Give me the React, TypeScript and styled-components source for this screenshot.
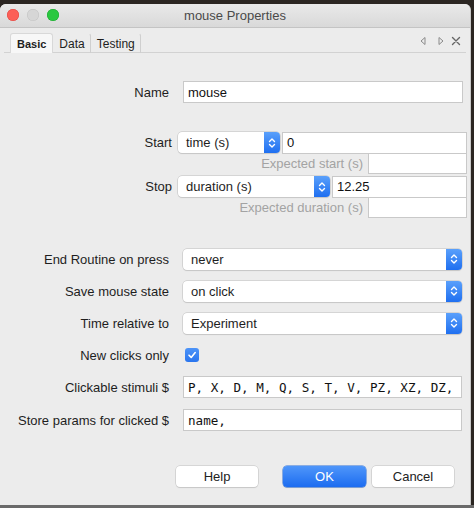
import React from 'react';
import styled, { createGlobalStyle } from 'styled-components';

const GlobalStyle = createGlobalStyle`
  html, body {
    margin: 0;
    padding: 0;
    background: #2b2622;
  }
  body {
    font-family: 'Liberation Sans', Arial, sans-serif;
    font-size: 13px;
    color: #222;
  }
`;

const Stepper = () => (
  <StepperBox>
    <svg width="8" height="12" viewBox="0 0 8 12">
      <path d="M1.5 4.5 L4 2 L6.5 4.5 M1.5 7.5 L4 10 L6.5 7.5" fill="none" stroke="#fff" strokeWidth="1.4" strokeLinecap="round" strokeLinejoin="round" />
    </svg>
  </StepperBox>
);

type SelectProps = { value: string; width?: number };

const Select: React.FC<SelectProps> = ({ value, width }) => (
  <SelectBox $width={width}>
    <span>{value}</span>
    <Stepper />
  </SelectBox>
);

const NavIcons = () => (
  <NavRow>
    <NavArrows>
      <svg width="8" height="10" viewBox="0 0 8 10">
        <path d="M6 1.5 L2 5 L6 8.5 Z" fill="none" stroke="#8a8a8a" strokeWidth="1" strokeLinejoin="round" />
      </svg>
      <svg width="8" height="10" viewBox="0 0 8 10">
        <path d="M2 1.5 L6 5 L2 8.5 Z" fill="none" stroke="#8a8a8a" strokeWidth="1" strokeLinejoin="round" />
      </svg>
    </NavArrows>
    <svg width="10" height="10" viewBox="0 0 10 10">
      <path d="M1.5 1.5 L8.5 8.5 M8.5 1.5 L1.5 8.5" stroke="#666" strokeWidth="1.4" strokeLinecap="round" />
    </svg>
  </NavRow>
);

const App: React.FC = () => {
  return (
    <>
      <GlobalStyle />
      <Window>
        <TitleBar>
          <Lights>
            <Light $color="#fc5f57" $edge="#de4640" />
            <Light $color="#d6d6d6" $edge="#c2c2c2" />
            <Light $color="#2ac840" $edge="#1aa52e" />
          </Lights>
          <Title>mouse Properties</Title>
        </TitleBar>

        <TabBar>
          <Tabs>
            <Tab $active>Basic</Tab>
            <Tab>Data</Tab>
            <Tab>Testing</Tab>
          </Tabs>
          <NavIcons />
        </TabBar>

        <Panel>
          <NameRow>
            <Label $width={165}>Name</Label>
            <TextInput>mouse</TextInput>
          </NameRow>

          <TimingSection>
            <TimingRow>
              <Label $width={168}>Start</Label>
              <Select value="time (s)" width={102} />
              <TextInput>0</TextInput>
            </TimingRow>
            <ExpectedRow>
              <HintLabel>Expected start (s)</HintLabel>
              <SmallInput />
            </ExpectedRow>
            <TimingRow $spaced>
              <Label $width={168}>Stop</Label>
              <Select value="duration (s)" width={152} />
              <TextInput>12.25</TextInput>
            </TimingRow>
            <ExpectedRow>
              <HintLabel>Expected duration (s)</HintLabel>
              <SmallInput />
            </ExpectedRow>
          </TimingSection>

          <ParamsGrid>
            <Label>End Routine on press</Label>
            <Select value="never" />
            <Label>Save mouse state</Label>
            <Select value="on click" />
            <Label>Time relative to</Label>
            <Select value="Experiment" />
            <Label>New clicks only</Label>
            <CheckRow>
              <Checkbox>
                <svg width="10" height="10" viewBox="0 0 10 10">
                  <path d="M2 5.2 L4.2 7.4 L8.2 2.6" fill="none" stroke="#fff" strokeWidth="1.6" strokeLinecap="round" strokeLinejoin="round" />
                </svg>
              </Checkbox>
            </CheckRow>
            <Label>Clickable stimuli $</Label>
            <CodeInput>P, X, D, M, Q, S, T, V, PZ, XZ, DZ,</CodeInput>
            <Label>Store params for clicked $</Label>
            <CodeInput>name,</CodeInput>
          </ParamsGrid>

          <ButtonRow>
            <Button>Help</Button>
            <Spacer />
            <Button $primary>OK</Button>
            <Button>Cancel</Button>
          </ButtonRow>
        </Panel>
      </Window>
      <Dock />
    </>
  );
};

const Window = styled.div`
  margin: 4px 3px 0 0;
  height: 501px;
  background: #ececec;
  border-radius: 6px 6px 0 0;
  border-right: 1px solid #c8c8c8;
  display: flex;
  flex-direction: column;
  overflow: hidden;
`;

const TitleBar = styled.div`
  position: relative;
  height: 23px;
  display: flex;
  align-items: center;
  justify-content: center;
  background: linear-gradient(#e9e9e9, #d9d9d9);
  border-bottom: 1px solid #c4c4c4;
`;

const Lights = styled.div`
  position: absolute;
  left: 7px;
  top: 5px;
  display: flex;
  gap: 8px;
`;

const Light = styled.span<{ $color: string; $edge: string }>`
  width: 12px;
  height: 12px;
  border-radius: 50%;
  background: ${(p) => p.$color};
  box-shadow: inset 0 0 0 0.5px ${(p) => p.$edge};
`;

const Title = styled.span`
  font-size: 13px;
  color: #4a4a4a;
`;

const TabBar = styled.div`
  display: flex;
  align-items: flex-end;
  justify-content: space-between;
  height: 24px;
  margin: 0 4px;
  border-bottom: 1px solid #d2d2d2;
`;

const Tabs = styled.div`
  display: flex;
  align-items: flex-end;
  padding-left: 6px;
`;

const Tab = styled.div<{ $active?: boolean }>`
  height: 19px;
  display: flex;
  align-items: center;
  padding: 0 ${(p) => (p.$active ? '6px' : '5px')};
  font-size: ${(p) => (p.$active ? '11px' : '12px')};
  font-weight: ${(p) => (p.$active ? 700 : 400)};
  color: #1e1e1e;
  background: ${(p) => (p.$active ? '#f7f7f7' : 'transparent')};
  border: 1px solid ${(p) => (p.$active ? '#d8d8d8' : 'transparent')};
  border-bottom: none;
  border-right: 1px solid ${(p) => (p.$active ? '#d8d8d8' : '#cfcfcf')};
  border-radius: 3px 3px 0 0;
  margin-bottom: -1px;
`;

const NavRow = styled.div`
  display: flex;
  align-items: center;
  gap: 6px;
  height: 19px;
  padding-right: 5px;
  margin-bottom: 2px;
`;

const NavArrows = styled.div`
  display: flex;
  align-items: center;
  gap: 10px;
`;

const Panel = styled.div`
  flex: 1;
  display: flex;
  flex-direction: column;
  margin: 0 3px 0 4px;
  padding-top: 28px;
`;

const Label = styled.div<{ $width?: number }>`
  ${(p) => (p.$width ? `width: ${p.$width}px;` : '')}
  flex-shrink: 0;
  text-align: right;
  font-size: 13px;
  color: #1e1e1e;
  white-space: nowrap;
`;

const HintLabel = styled(Label)`
  color: #a3a3a3;
`;

const NameRow = styled.div`
  display: flex;
  align-items: center;
  gap: 14px;
  height: 22px;
  padding-right: 4px;
`;

const TextInput = styled.div`
  flex: 1;
  height: 20px;
  display: flex;
  align-items: center;
  padding: 0 4px;
  background: #fff;
  border: 1px solid #c9c9c9;
  font-size: 13px;
  color: #111;
  min-width: 0;
`;

const SmallInput = styled.div`
  width: 97px;
  height: 19px;
  background: #fff;
  border: 1px solid #c9c9c9;
`;

const CodeInput = styled(TextInput)`
  font-family: 'DejaVu Sans Mono', 'Liberation Mono', monospace;
  font-size: 12.6px;
  white-space: nowrap;
  overflow: hidden;
`;

const TimingSection = styled.div`
  display: flex;
  flex-direction: column;
  margin-top: 29px;
`;

const TimingRow = styled.div<{ $spaced?: boolean }>`
  display: flex;
  align-items: center;
  height: 21px;
  gap: 2px;
  margin-top: ${(p) => (p.$spaced ? '2px' : '0')};
  & > ${Label} {
    margin-right: 4px;
  }
`;

const ExpectedRow = styled.div`
  display: flex;
  align-items: center;
  justify-content: flex-end;
  gap: 5px;
  height: 21px;
`;

const SelectBox = styled.div<{ $width?: number }>`
  ${(p) => (p.$width ? `width: ${p.$width}px;` : 'flex: 1;')}
  flex-shrink: 0;
  height: 21px;
  box-sizing: border-box;
  display: flex;
  align-items: center;
  justify-content: space-between;
  padding-left: 8px;
  background: #fff;
  border-radius: 4px;
  box-shadow: 0 0 0 0.5px #bdbdbd, 0 1px 1px rgba(0, 0, 0, 0.12);
  font-size: 13px;
  color: #1e1e1e;
`;

const StepperBox = styled.span`
  width: 16px;
  height: 21px;
  display: flex;
  align-items: center;
  justify-content: center;
  background: linear-gradient(#5aa0fb, #1f6ff0);
  border-radius: 0 4px 4px 0;
`;

const ParamsGrid = styled.div`
  display: grid;
  grid-template-columns: 165px 1fr;
  grid-template-rows: repeat(4, 22px) 22px 22px;
  column-gap: 14px;
  row-gap: 10px;
  align-items: center;
  margin-top: 30px;
  padding-right: 5px;
  & > :nth-child(11), & > :nth-child(12) {
    margin-top: 2px;
  }
`;

const CheckRow = styled.div`
  display: flex;
  align-items: center;
  padding-left: 2px;
`;

const Checkbox = styled.span`
  width: 14px;
  height: 14px;
  border-radius: 3px;
  display: flex;
  align-items: center;
  justify-content: center;
  background: linear-gradient(#4d94f8, #2a75ee);
`;

const ButtonRow = styled.div`
  display: flex;
  align-items: center;
  gap: 6px;
  margin-top: 36px;
  padding-left: 172px;
`;

const Spacer = styled.span`
  width: 13px;
`;

const Button = styled.button<{ $primary?: boolean }>`
  width: ${(p) => (p.$primary ? 83 : 82)}px;
  height: 21px;
  border: none;
  border-radius: 4px;
  font-family: 'Liberation Sans', Arial, sans-serif;
  font-size: 13px;
  color: ${(p) => (p.$primary ? '#fff' : '#222')};
  background: ${(p) => (p.$primary ? 'linear-gradient(#4f96fa, #1c6cf0)' : '#fff')};
  box-shadow: ${(p) =>
    p.$primary
      ? '0 0 0 0.5px #2a6fd8, 0 1px 1px rgba(0,0,0,0.15)'
      : '0 0 0 0.5px #c0c0c0, 0 1px 1px rgba(0,0,0,0.12)'};
  padding: 0;
`;

const Dock = styled.div`
  height: 3px;
  background: #6a6a6a;
`;

export default App;
